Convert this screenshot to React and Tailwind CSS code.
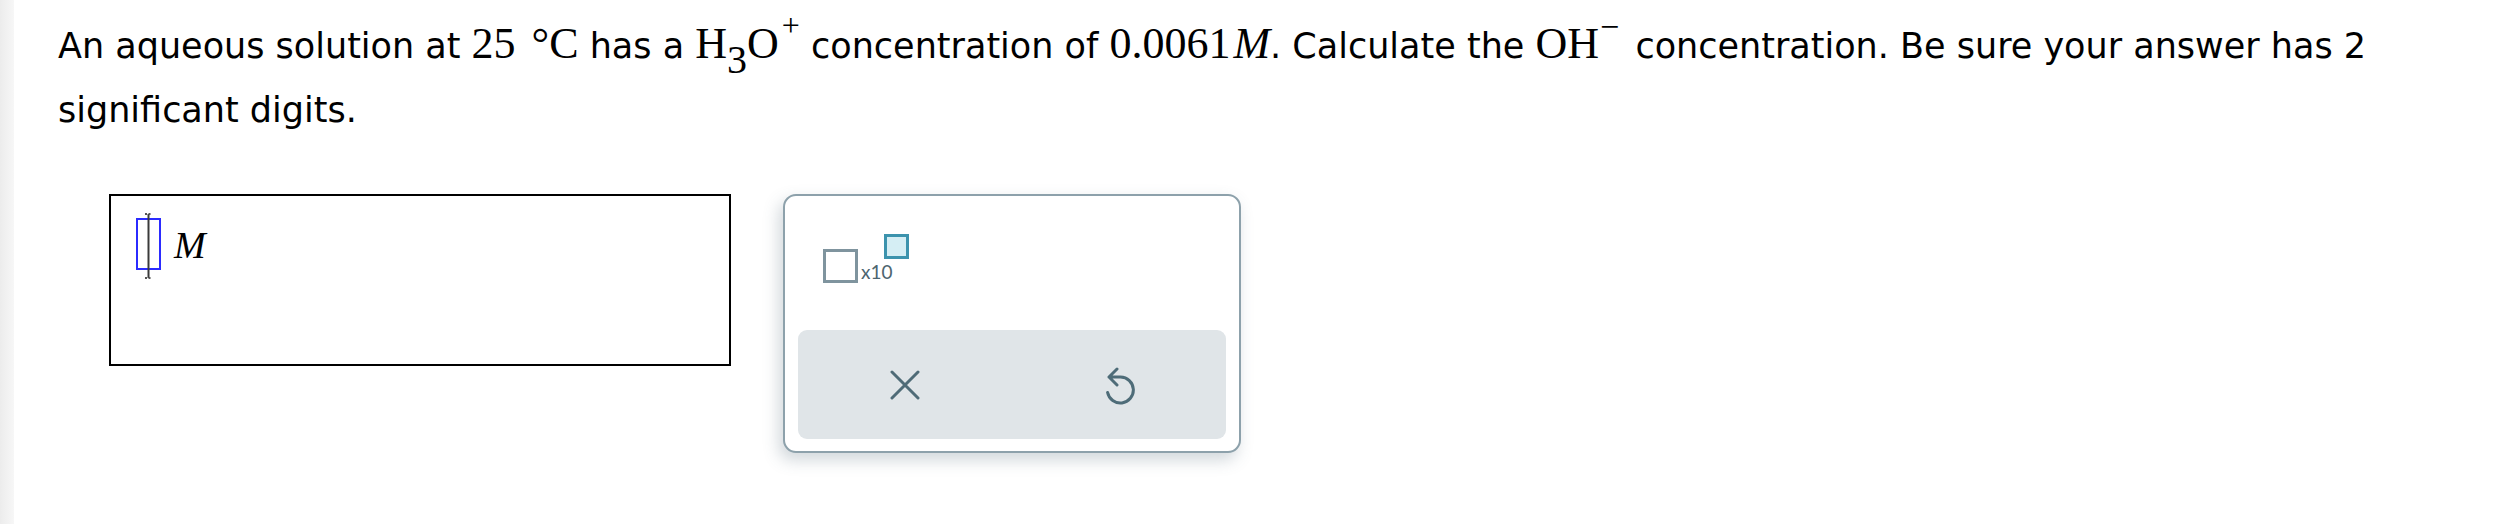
import React from "react";

function Mth({ children, className = "" }) {
    return (
        <span className={`font-['Liberation_Serif','Times_New_Roman',serif] text-[44px] leading-[0] ${className}`}>
            {children}
        </span>
    );
}

function CursorMark() {
    return (
        <svg width="28" height="68" viewBox="0 0 28 68" className="shrink-0">
            <rect x="2" y="7" width="23" height="50" fill="none" stroke="#2b2bff" strokeWidth="2" />
            <line x1="13.5" y1="2" x2="13.5" y2="66" stroke="#3a3a3a" strokeWidth="2" />
            <line x1="10" y1="2" x2="17" y2="2" stroke="#555" strokeWidth="2" strokeDasharray="2 1.5" />
            <line x1="10" y1="66" x2="17" y2="66" stroke="#555" strokeWidth="2" strokeDasharray="2 1.5" />
        </svg>
    );
}

export default function App() {
    return (
        <div className="flex h-[524px] w-full bg-white text-black">
            <div className="w-[14px] shrink-0 bg-linear-to-r from-[#ececec] to-[#f7f7f7]"></div>
            <div className="flex flex-col">
                {/* enunciado */}
                <div className="pl-[44px] pt-[14px] font-['DejaVu_Sans','Verdana',sans-serif] text-[35px] leading-[64px]">
                    <div className="whitespace-nowrap">
                        An aqueous solution at <Mth>25<span className="ml-[16px]">°C</span></Mth> has a{" "}
                        <Mth>
                            H<span className="text-[40px] align-[-15px]">3</span>O
                            <span className="ml-[3px] text-[32px] align-[22px]">+</span>
                        </Mth>{" "}
                        concentration of <Mth>0.0061<span className="ml-[3px] italic">M</span></Mth>. Calculate the{" "}
                        <Mth>
                            OH<span className="ml-[1px] mr-[5px] text-[34px] align-[20px]">−</span>
                        </Mth>{" "}
                        concentration. Be sure your answer has 2
                    </div>
                    <div className="whitespace-nowrap">significant digits.</div>
                </div>

                <div className="mt-[52px] flex items-start">
                    {/* respuesta */}
                    <div className="ml-[95px] h-[172px] w-[622px] border-2 border-black">
                        <div className="flex items-start pl-[24px] pt-[16px]">
                            <CursorMark />
                            <span className="ml-[11px] mt-[14px] font-['Liberation_Serif',serif] text-[38px] italic leading-none">M</span>
                        </div>
                    </div>

                    {/* teclado */}
                    <div className="ml-[52px] flex h-[259px] w-[458px] flex-col rounded-[13px] border-2 border-[#8da1ab] bg-white shadow-[-4px_7px_16px_rgba(70,95,110,0.25)]">
                        <div className="flex items-start pl-[38px] pt-[38px]">
                            <div className="mt-[15px] h-[34px] w-[35px] border-[3px] border-[#7f949e]"></div>
                            <span className="ml-[3px] mt-[28px] font-['Lato',sans-serif] text-[19px] leading-none text-[#4c6570]">x10</span>
                            <div className="-ml-[9px] h-[25px] w-[25px] border-[3px] border-[#3c93ad] bg-[#d5eef4]"></div>
                        </div>
                        <div className="mx-[13px] mb-[12px] mt-auto flex h-[109px] rounded-[9px] bg-[#e0e5e8]">
                            <button className="flex flex-1 items-center justify-center">
                                <svg width="30" height="30" viewBox="0 0 30 30">
                                    <path d="M2 2 L28 28 M28 2 L2 28" stroke="#4f6b77" strokeWidth="3" strokeLinecap="round" fill="none" />
                                </svg>
                            </button>
                            <button className="flex flex-1 items-center justify-center">
                                <svg width="40" height="40" viewBox="0 0 40 40" className="ml-[2px]">
                                    <path
                                        d="M17 4 L9 12 L17 20 M9 12 H20.5 A13 13 0 1 1 7.6 27.5"
                                        stroke="#4e6c78"
                                        strokeWidth="3"
                                        strokeLinecap="round"
                                        strokeLinejoin="round"
                                        fill="none"
                                    />
                                </svg>
                            </button>
                        </div>
                    </div>
                </div>
            </div>
        </div>
    );
}
